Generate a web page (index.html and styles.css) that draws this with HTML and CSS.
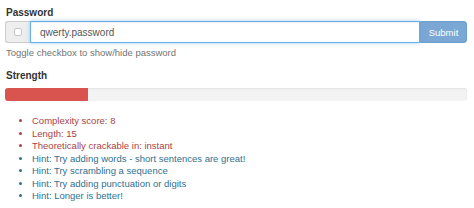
FILE: index.html
```
<!DOCTYPE html>
<html>

<head>
  <meta charset="utf-8">
  <meta name="viewport" content="width=device-width">
  <title>Password strength</title>
  <link rel="stylesheet" href="styles.css">
</head>

<body>
  <div class="form">
    <label class="label">Password</label>
    <div class="input-group">
      <span class="addon"><span class="check"></span></span>
      <input class="field" type="text" value="qwerty.password">
      <button class="submit">Submit</button>
    </div>
    <div class="help">Toggle checkbox to show/hide password</div>

    <label class="label strength">Strength</label>
    <div class="progress">
      <div class="bar" style="width: 18%"></div>
    </div>

    <ul class="feedback">
      <li class="danger">Complexity score: 8</li>
      <li class="danger">Length: 15</li>
      <li class="danger">Theoretically crackable in: instant</li>
      <li class="info">Hint: Try adding words - short sentences are great!</li>
      <li class="info">Hint: Try scrambling a sequence</li>
      <li class="info">Hint: Try adding punctuation or digits</li>
      <li class="info">Hint: Longer is better!</li>
    </ul>
  </div>
</body>

</html>
```

FILE: styles.css
```
body {
  font-family: "Liberation Sans", Arial, sans-serif;
  font-size: 9.5px;
  color: #333;
  background-color: #fff;
  margin: 0;
  padding: 0;
}

.form {
  padding: 6px 7px 0 5px;
}

.label {
  display: block;
  font-weight: bold;
  font-size: 10px;
  line-height: 13px;
  margin-left: 1px;
  margin-bottom: 2px;
}

.input-group {
  display: flex;
  height: 22px;
}

.addon {
  width: 24px;
  background-color: #eee;
  border: 1px solid #ccc;
  border-right: none;
  border-radius: 3px 0 0 3px;
  display: flex;
  align-items: center;
  justify-content: center;
}

.check {
  width: 6px;
  height: 6px;
  background-color: #fff;
  border: 1px solid #c8c8c8;
  border-radius: 2px;
}

.field {
  flex: 1;
  min-width: 0;
  box-sizing: border-box;
  height: 22px;
  margin: 0;
  padding: 0 9px;
  font-family: "Liberation Sans", Arial, sans-serif;
  font-size: 10px;
  color: #555;
  background-color: #fff;
  border: 1px solid #66afe9;
  outline: none;
  box-shadow: inset 0 1px 1px rgba(0, 0, 0, .075), 0 0 4px rgba(102, 175, 233, .6);
  position: relative;
  z-index: 1;
}

.submit {
  width: 47px;
  height: 22px;
  margin: 0;
  padding: 0;
  font-family: "Liberation Sans", Arial, sans-serif;
  font-size: 9.5px;
  color: #fff;
  background-color: #7aa7d3;
  border: 1px solid #6f9dcb;
  border-radius: 0 3px 3px 0;
}

.help {
  color: #737373;
  line-height: 13px;
  margin-top: 3px;
  margin-left: 1px;
}

.strength {
  margin-top: 10px;
  margin-bottom: 0;
}

.progress {
  height: 13px;
  margin-top: 6px;
  background-color: #f3f3f3;
  border-radius: 3px;
  box-shadow: inset 0 1px 2px rgba(0, 0, 0, .08);
  overflow: hidden;
}

.bar {
  height: 100%;
  background-color: #d9534f;
}

.feedback {
  margin: 14px 0 0 0;
  padding-left: 27px;
  line-height: 12.5px;
}

.danger {
  color: #a94442;
}

.info {
  color: #31708f;
}
```
